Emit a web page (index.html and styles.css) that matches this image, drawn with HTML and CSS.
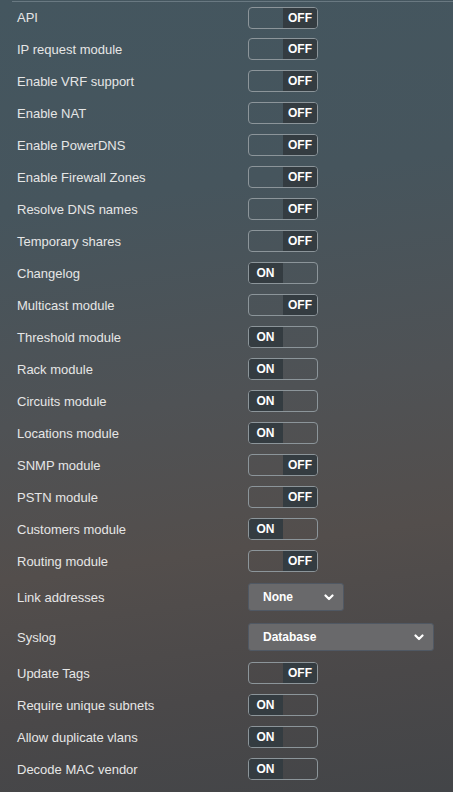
FILE: index.html
```html
<!DOCTYPE html>
<html>
<head>
<meta charset="utf-8">
<link rel="stylesheet" href="styles.css">
</head>
<body>
<div class="page">
  <div class="settings">
    <div class="row"><span class="label">API</span><span class="toggle off"><span class="knob">OFF</span></span></div>
    <div class="row"><span class="label">IP request module</span><span class="toggle off"><span class="knob">OFF</span></span></div>
    <div class="row"><span class="label">Enable VRF support</span><span class="toggle off"><span class="knob">OFF</span></span></div>
    <div class="row"><span class="label">Enable NAT</span><span class="toggle off"><span class="knob">OFF</span></span></div>
    <div class="row"><span class="label">Enable PowerDNS</span><span class="toggle off"><span class="knob">OFF</span></span></div>
    <div class="row"><span class="label">Enable Firewall Zones</span><span class="toggle off"><span class="knob">OFF</span></span></div>
    <div class="row"><span class="label">Resolve DNS names</span><span class="toggle off"><span class="knob">OFF</span></span></div>
    <div class="row"><span class="label">Temporary shares</span><span class="toggle off"><span class="knob">OFF</span></span></div>
    <div class="row"><span class="label">Changelog</span><span class="toggle on"><span class="knob">ON</span></span></div>
    <div class="row"><span class="label">Multicast module</span><span class="toggle off"><span class="knob">OFF</span></span></div>
    <div class="row"><span class="label">Threshold module</span><span class="toggle on"><span class="knob">ON</span></span></div>
    <div class="row"><span class="label">Rack module</span><span class="toggle on"><span class="knob">ON</span></span></div>
    <div class="row"><span class="label">Circuits module</span><span class="toggle on"><span class="knob">ON</span></span></div>
    <div class="row"><span class="label">Locations module</span><span class="toggle on"><span class="knob">ON</span></span></div>
    <div class="row"><span class="label">SNMP module</span><span class="toggle off"><span class="knob">OFF</span></span></div>
    <div class="row"><span class="label">PSTN module</span><span class="toggle off"><span class="knob">OFF</span></span></div>
    <div class="row"><span class="label">Customers module</span><span class="toggle on"><span class="knob">ON</span></span></div>
    <div class="row"><span class="label">Routing module</span><span class="toggle off"><span class="knob">OFF</span></span></div>
    <div class="row tall"><span class="label">Link addresses</span>
      <span class="select narrow"><span class="value">None</span>
        <svg class="chev" width="10" height="7" viewBox="0 0 10 7"><path d="M1.5 1.5 L5 5 L8.5 1.5" fill="none" stroke="#fff" stroke-width="2.2" stroke-linecap="round" stroke-linejoin="round"/></svg>
      </span>
    </div>
    <div class="row tall"><span class="label">Syslog</span>
      <span class="select wide"><span class="value">Database</span>
        <svg class="chev" width="10" height="7" viewBox="0 0 10 7"><path d="M1.5 1.5 L5 5 L8.5 1.5" fill="none" stroke="#fff" stroke-width="2.2" stroke-linecap="round" stroke-linejoin="round"/></svg>
      </span>
    </div>
    <div class="row"><span class="label">Update Tags</span><span class="toggle off"><span class="knob">OFF</span></span></div>
    <div class="row"><span class="label">Require unique subnets</span><span class="toggle on"><span class="knob">ON</span></span></div>
    <div class="row"><span class="label">Allow duplicate vlans</span><span class="toggle on"><span class="knob">ON</span></span></div>
    <div class="row"><span class="label">Decode MAC vendor</span><span class="toggle on"><span class="knob">ON</span></span></div>
  </div>
</div>
</body>
</html>
```

FILE: styles.css
```css
html, body {
  margin: 0;
  padding: 0;
  height: 100%;
}
body {
  background: linear-gradient(172deg, #44565f 0%, #46555d 25%, #4f5255 50%, #534e4c 68%, #4a4849 85%, #434548 100%);
  font-family: "Liberation Sans", Arial, sans-serif;
  color: #e8e8e8;
  overflow: hidden;
}
.page {
  padding-top: 1px;
  padding-left: 12px;
}
.settings {
  border-top: 1px solid rgba(150, 165, 172, 0.45);
  display: flex;
  flex-direction: column;
}
.row {
  display: flex;
  align-items: center;
  height: 32px;
  padding-left: 5px;
}
.row:first-child {
  height: 31px;
}
.row.tall {
  height: 40px;
}
.label {
  width: 231px;
  font-size: 13px;
  color: #e6e6e6;
}
.toggle {
  box-sizing: border-box;
  width: 70px;
  height: 22px;
  border: 1px solid #8c959a;
  border-radius: 4px;
  display: flex;
  overflow: hidden;
}
.toggle.off {
  justify-content: flex-end;
}
.knob {
  width: 34px;
  height: 100%;
  background: #343c41;
  color: #fff;
  font-size: 12px;
  font-weight: bold;
  display: flex;
  align-items: center;
  justify-content: center;
}
.toggle.on .knob {
  width: 34px;
  padding-right: 1px;
  box-sizing: border-box;
}
.select {
  box-sizing: border-box;
  height: 28px;
  background: #69696b;
  border: 1px solid #505863;
  border-radius: 3px;
  display: flex;
  align-items: center;
  justify-content: space-between;
  padding: 0 9px 0 14px;
}
.select.narrow {
  width: 96px;
}
.select.wide {
  width: 186px;
}
.value {
  font-size: 12px;
  font-weight: bold;
  color: #fff;
}
.chev {
  display: block;
}
```
